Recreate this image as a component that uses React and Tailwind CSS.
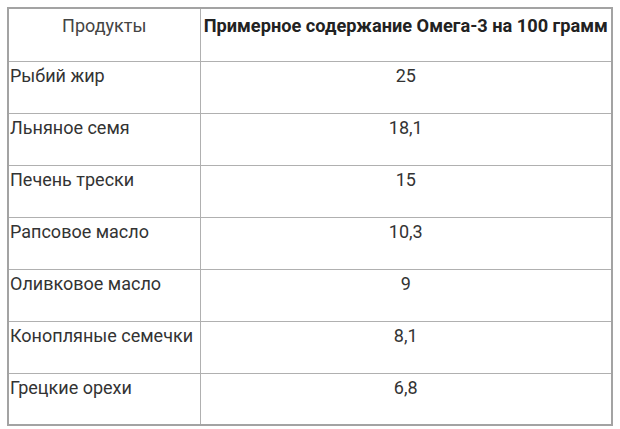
const rows = [
  ['Рыбий жир', '25'],
  ['Льняное семя', '18,1'],
  ['Печень трески', '15'],
  ['Рапсовое масло', '10,3'],
  ['Оливковое масло', '9'],
  ['Конопляные семечки', '8,1'],
  ['Грецкие орехи', '6,8'],
];

export default function App() {
  return (
    <div className="w-[620px] h-[429px] bg-white pt-[7px] pl-[7px] font-['Roboto',sans-serif] text-[18px] text-[#333]">
      <table className="w-[606px] border-collapse border-2 border-[#a3a3a3]">
        <thead>
          <tr className="h-[53px]">
            <th className="w-[192px] border border-[#b0b0b0] align-top pt-[6px] text-[18px] font-normal text-[#444] leading-[22px]">
              Продукты
            </th>
            <th className="border border-[#b0b0b0] align-top pt-[6px] text-[18.2px] font-bold text-[#222] leading-[22px] whitespace-nowrap px-0">
              Примерное содержание Омега-3 на 100 грамм
            </th>
          </tr>
        </thead>
        <tbody>
          {rows.map(([name, value]) => (
            <tr key={name} className="h-[52px]">
              <td className="border border-[#b0b0b0] align-top pt-[3px] pl-[1px] leading-[22px] whitespace-nowrap">{name}</td>
              <td className="border border-[#b0b0b0] align-top pt-[3px] text-center leading-[22px]">{value}</td>
            </tr>
          ))}
        </tbody>
      </table>
    </div>
  );
}
